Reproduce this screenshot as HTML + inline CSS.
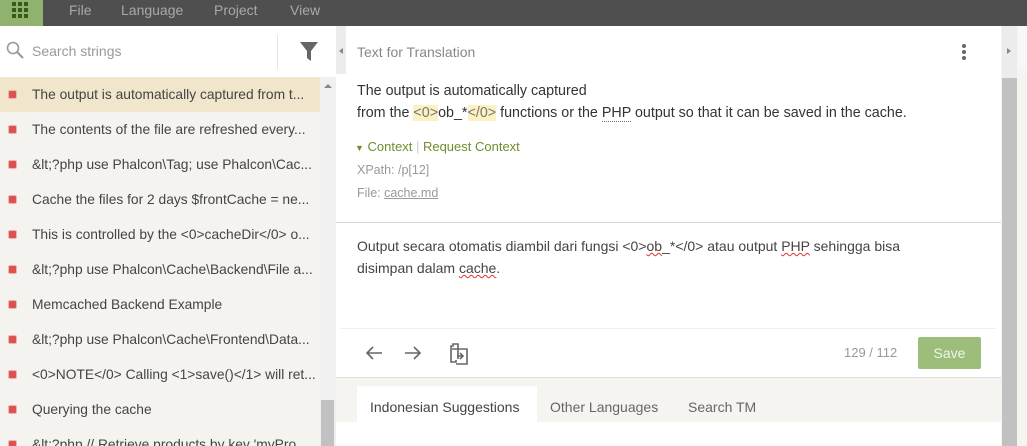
<!DOCTYPE html>
<html style="overflow:hidden;height:446px"><head><meta charset="utf-8"><style>
*{box-sizing:border-box;margin:0;padding:0}
body{width:1027px;height:446px;overflow:hidden;background:#f5f4f1;font-family:"Liberation Sans",sans-serif;position:relative;color:#333}
.top{position:absolute;left:0;top:0;width:1027px;height:26px;background:#4f4f4f}
.grid{position:absolute;left:0;top:0;width:43px;height:26px;background:#8fb36f}
.menu{position:absolute;top:0;line-height:20px;color:#a9a9a9;font-size:14px}
.left{position:absolute;left:0;top:26px;width:336px;height:420px;background:#fff}
.search{position:absolute;left:32px;top:43px;font-size:14px;color:#999}
.sep{position:absolute;left:277px;top:35px;width:1px;height:34px;background:#e3e3e3}
.list{position:absolute;left:0;top:77px;width:320px;height:369px;background:#f4f3f0}
.row{height:35px;line-height:35px;font-size:13.8px;color:#444;padding-left:32px;position:relative;white-space:nowrap;overflow:hidden}
.row:before{content:"";position:absolute;left:9px;top:14px;width:7px;height:7px;background:#d9534f;border-radius:1px;box-shadow:0 0 0 1px #efb3b3}
.row.sel{background:#f1e6cb}
.lsb{position:absolute;left:320px;top:77px;width:16px;height:369px;background:#f0f0f0}
.mid{position:absolute;left:336px;top:26px;width:665px;height:420px;background:#fff}
.strip{position:absolute;left:336px;top:26px;width:10px;height:48px;background:#ececec}
.hd{position:absolute;left:357px;top:44px;font-size:14px;color:#888}
.src{position:absolute;left:357px;top:80px;font-size:14.3px;line-height:22px;color:#333;white-space:nowrap}
.tag{background:#fbf1c2;color:#777}
.ctx{position:absolute;left:355px;top:139px;font-size:13px;color:#6f8d2e}
.meta{position:absolute;left:357px;font-size:12.5px;color:#999}
.tr{position:absolute;left:357px;top:235px;font-size:14px;line-height:22px;color:#444}
.sq{text-decoration:underline wavy #d33;text-decoration-thickness:1px}
.hr{position:absolute;height:1px}
.save{position:absolute;left:918px;top:337px;width:63px;height:32px;background:#9dbd7a;border-radius:2px;color:#eef6e6;font-size:14px;line-height:32px;text-align:center}
.tabs{position:absolute;left:336px;top:378px;width:665px;height:44px;background:#f5f4f1}
.tab{position:absolute;top:399px;font-size:14px;color:#666}
.rsb{position:absolute;left:1002px;top:26px;width:15px;height:420px;background:#c1c1c1}
</style></head><body>
<div class="top"></div>
<div class="grid"><svg width="43" height="26"><g fill="#3a5a1a">
<rect x="12" y="2" width="4" height="4"/><rect x="18" y="2" width="4" height="4"/><rect x="24" y="2" width="4" height="4"/>
<rect x="12" y="8" width="4" height="4"/><rect x="18" y="8" width="4" height="4"/><rect x="24" y="8" width="4" height="4"/>
<rect x="12" y="14" width="4" height="4"/><rect x="18" y="14" width="4" height="4"/><rect x="24" y="14" width="4" height="4"/></g></svg></div>
<div class="menu" style="left:69px">File</div>
<div class="menu" style="left:121px">Language</div>
<div class="menu" style="left:214px">Project</div>
<div class="menu" style="left:290px">View</div>
<div class="left"></div>
<svg style="position:absolute;left:6px;top:41px" width="20" height="20"><circle cx="7" cy="7" r="5.5" fill="none" stroke="#999" stroke-width="1.6"/><line x1="11" y1="11" x2="17" y2="17" stroke="#999" stroke-width="2"/></svg>
<div class="search">Search strings</div>
<div class="sep"></div>
<svg style="position:absolute;left:299px;top:41px" width="20" height="22"><path d="M1 1H19L12 10V20L8 17V10Z" fill="#666"/></svg>
<div class="list">
<div class="row sel">The output is automatically captured from t...</div>
<div class="row">The contents of the file are refreshed every...</div>
<div class="row">&amp;lt;?php use Phalcon\Tag; use Phalcon\Cac...</div>
<div class="row">Cache the files for 2 days $frontCache = ne...</div>
<div class="row">This is controlled by the &lt;0&gt;cacheDir&lt;/0&gt; o...</div>
<div class="row">&amp;lt;?php use Phalcon\Cache\Backend\File a...</div>
<div class="row">Memcached Backend Example</div>
<div class="row">&amp;lt;?php use Phalcon\Cache\Frontend\Data...</div>
<div class="row">&lt;0&gt;NOTE&lt;/0&gt; Calling &lt;1&gt;save()&lt;/1&gt; will ret...</div>
<div class="row">Querying the cache</div>
<div class="row">&amp;lt;?php // Retrieve products by key 'myPro...</div>
</div>
<div class="lsb"><div style="position:absolute;left:1px;top:323px;width:13px;height:46px;background:#c1c1c1"></div>
<div style="position:absolute;left:4px;top:7px;border:4px solid transparent;border-bottom:4px solid #888;border-top:0"></div></div>
<div class="mid"></div>
<div class="strip"><div style="position:absolute;left:3px;top:22px;border:3px solid transparent;border-right:4px solid #888;border-left:0"></div></div>
<div class="hd">Text for Translation</div>
<svg style="position:absolute;left:960px;top:43px" width="8" height="18"><circle cx="4" cy="3" r="2" fill="#666"/><circle cx="4" cy="9" r="2" fill="#666"/><circle cx="4" cy="15" r="2" fill="#666"/></svg>
<div class="src">The output is automatically captured<br>from the <span class="tag">&lt;0&gt;</span>ob_*<span class="tag">&lt;/0&gt;</span> functions or the <span style="border-bottom:1px dotted #666">PHP</span> output so that it can be saved in the cache.</div>
<div class="ctx"><span style="font-size:9px">&#9660;</span> Context <span style="color:#ccc">|</span> Request Context</div>
<div class="meta" style="top:163px">XPath: /p[12]</div>
<div class="meta" style="top:186px">File: <u>cache.md</u></div>
<div class="hr" style="left:336px;top:222px;width:665px;background:#d8d8d8"></div>
<div class="tr">Output secara otomatis diambil dari fungsi &lt;0&gt;<span class="sq">ob</span>_*&lt;/0&gt; atau output <span class="sq">PHP</span> sehingga bisa<br>disimpan dalam <span class="sq">cache</span>.</div>
<div class="hr" style="left:340px;top:328px;width:655px;background:#eee"></div>
<svg style="position:absolute;left:364px;top:343px" width="120" height="22" fill="none" stroke="#666" stroke-width="1.6">
<path d="M18 10H3M9 4L3 10L9 16"/><path d="M41 10H56M50 4L56 10L50 16"/>
<path d="M94 16V1H89V3H87V19H92V17"/><path d="M88 6H103V21H92" /><path d="M93 13H99M96 10L99 13L96 16"/></svg>
<div style="position:absolute;left:844px;top:345px;font-size:13px;color:#999">129 / 112</div>
<div class="save">Save</div>
<div class="hr" style="left:336px;top:377px;width:665px;background:#ddd"></div>
<div class="tabs"></div>
<div style="position:absolute;left:357px;top:386px;width:180px;height:36px;background:#fff"></div>
<div class="tab" style="left:370px;color:#444">Indonesian Suggestions</div>
<div class="tab" style="left:550px">Other Languages</div>
<div class="tab" style="left:688px">Search TM</div>
<div style="position:absolute;left:336px;top:422px;width:665px;height:24px;background:#fff"></div>
<div class="rsb"><div style="position:absolute;left:0;top:0;width:15px;height:52px;background:#ececec"></div>
<div style="position:absolute;left:5px;top:22px;border:3px solid transparent;border-left:4px solid #888;border-right:0"></div></div>
<div style="position:absolute;left:1018px;top:26px;width:9px;height:44px;background:#f7f7f7"></div>
</body></html>
